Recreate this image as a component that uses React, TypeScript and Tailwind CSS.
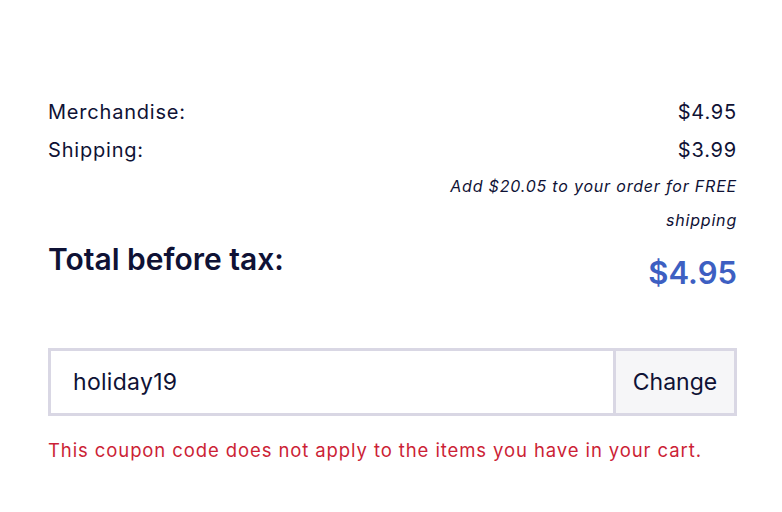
import React from "react";

export default function App() {
  return (
    <div
      className="w-[782px] h-[512px] bg-white text-[#0f1235]"
      style={{ fontFamily: "Inter, 'Liberation Sans', sans-serif" }}
    >
      <div className="pl-[48px] pr-[45px] pt-[93px]">
        <div className="flex justify-between text-[20px] leading-[38px] tracking-[0.8px]">
          <span>Merchandise:</span>
          <span>$4.95</span>
        </div>
        <div className="flex justify-between text-[20px] leading-[38px] tracking-[0.8px]">
          <span>Shipping:</span>
          <span>$3.99</span>
        </div>
        <div className="ml-auto w-[300px] text-right italic text-[16px] leading-[34px] tracking-[0.8px]">
          Add $20.05 to your order for FREE shipping
        </div>
        <div className="flex justify-between items-start mt-[2px]">
          <span className="text-[30px] leading-[40px] font-semibold">Total before tax:</span>
          <span className="text-[31px] leading-[40px] font-semibold text-[#3d5fc2] mt-[14px]">$4.95</span>
        </div>
        <div className="mt-[55px] flex h-[68px] border-[3px] border-[#d9d7e4]">
          <div className="flex-1 flex items-center pl-[22px] text-[23px] tracking-[0.3px]">holiday19</div>
          <button className="w-[121px] border-l-[3px] border-[#d9d7e4] bg-[#f6f6f8] text-[23px]">Change</button>
        </div>
        <div className="mt-[21px] text-[18.5px] leading-[26px] tracking-[0.9px] text-[#cc1f36]">
          This coupon code does not apply to the items you have in your cart.
        </div>
      </div>
    </div>
  );
}
